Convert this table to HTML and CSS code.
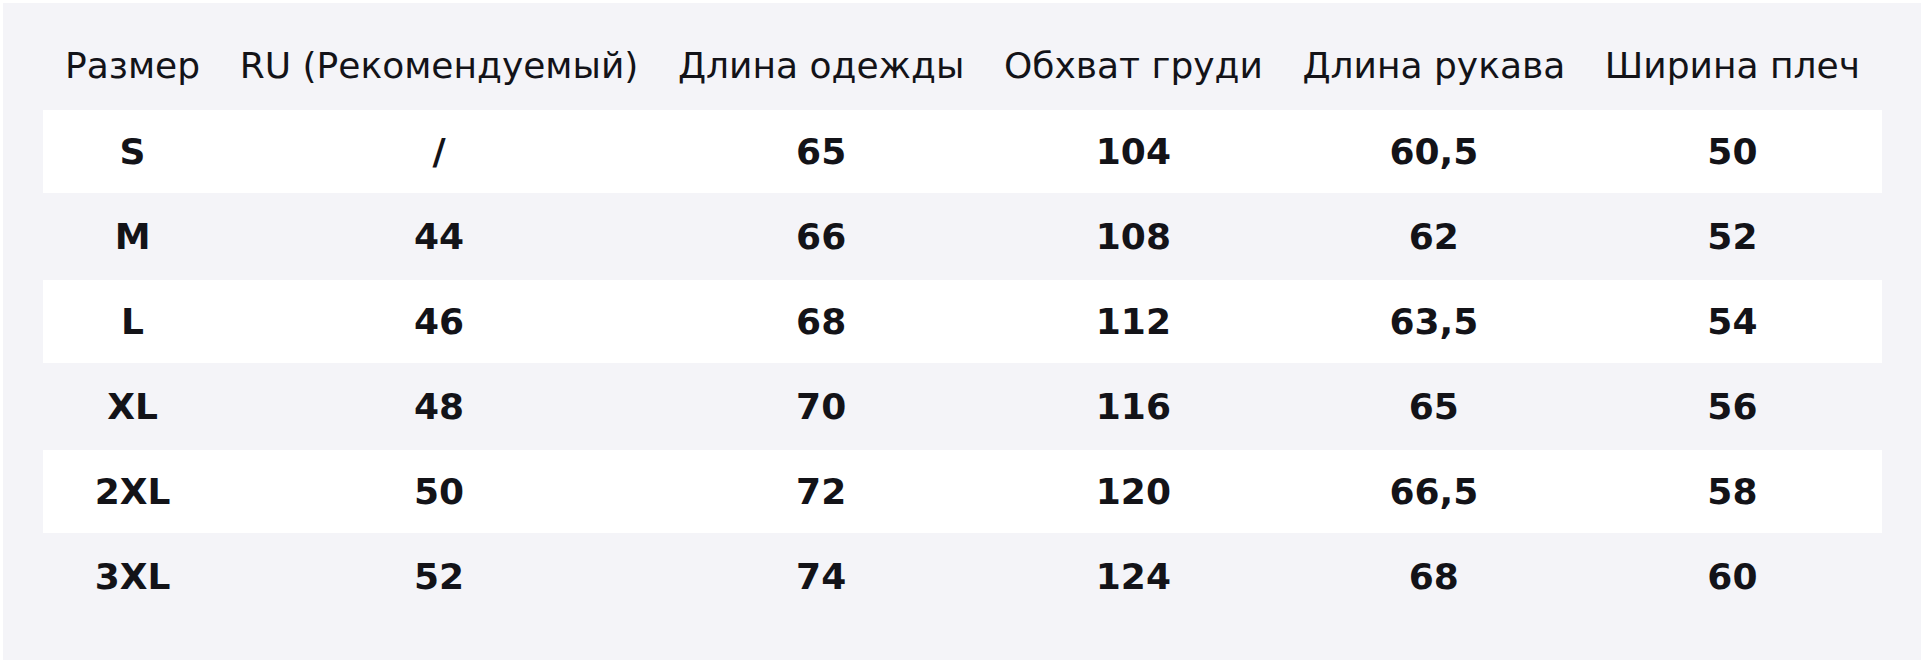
FILE: index.html
```html
<!DOCTYPE html>
<html lang="ru">
<head>
<meta charset="utf-8">
<title>Размеры</title>
<link rel="stylesheet" href="styles.css">
</head>
<body>
<div class="panel">
  <table class="size-table">
    <thead>
      <tr>
        <th>Размер</th>
        <th>RU (Рекомендуемый)</th>
        <th>Длина одежды</th>
        <th>Обхват груди</th>
        <th>Длина рукава</th>
        <th>Ширина плеч</th>
      </tr>
    </thead>
    <tbody>
      <tr class="odd"><td>S</td><td>/</td><td>65</td><td>104</td><td>60,5</td><td>50</td></tr>
      <tr class="even"><td>M</td><td>44</td><td>66</td><td>108</td><td>62</td><td>52</td></tr>
      <tr class="odd"><td>L</td><td>46</td><td>68</td><td>112</td><td>63,5</td><td>54</td></tr>
      <tr class="even"><td>XL</td><td>48</td><td>70</td><td>116</td><td>65</td><td>56</td></tr>
      <tr class="odd"><td>2XL</td><td>50</td><td>72</td><td>120</td><td>66,5</td><td>58</td></tr>
      <tr class="even"><td>3XL</td><td>52</td><td>74</td><td>124</td><td>68</td><td>60</td></tr>
    </tbody>
  </table>
</div>
</body>
</html>
```

FILE: styles.css
```css
html, body {
  margin: 0;
  padding: 0;
  background: #ffffff;
}

body {
  padding: 3px;
  font-family: "DejaVu Sans", sans-serif;
  color: #131318;
}

.panel {
  background: #f4f4f8;
  padding: 40px;
  height: 657px;
  box-sizing: border-box;
}

.size-table {
  border-collapse: collapse;
  border-spacing: 0;
}

.size-table th {
  font-weight: normal;
  font-size: 36px;
  line-height: 42px;
  padding: 2px 19.8px 23px;
  text-align: center;
  white-space: nowrap;
}

.size-table td {
  font-weight: bold;
  font-size: 36px;
  line-height: 42px;
  text-align: center;
  white-space: nowrap;
  padding: 0 19.8px;
}

.size-table th:first-child,
.size-table td:first-child {
  padding-left: 22px;
}

.size-table th:last-child,
.size-table td:last-child {
  padding-right: 22px;
}

.size-table tr.odd td {
  background: #ffffff;
  height: 83px;
}

.size-table tr.even td {
  height: 87px;
}
```
